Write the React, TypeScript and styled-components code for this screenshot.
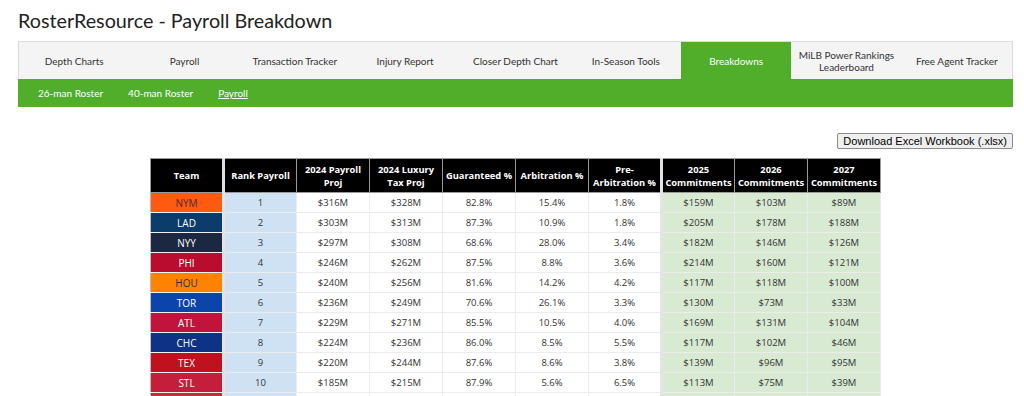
import React from "react";
import styled, { createGlobalStyle } from "styled-components";

const GlobalStyle = createGlobalStyle`
  html, body {
    margin: 0;
    padding: 0;
    background: #ffffff;
    overflow: hidden;
  }
  body {
    font-family: Lato, "Liberation Sans", sans-serif;
  }
`;

const Page = styled.div`
  width: 995px;
  padding: 8px 0 0 18px;
`;

const Title = styled.h1`
  margin: 0 0 7px;
  font-size: 19.75px;
  font-weight: 400;
  line-height: 26px;
  color: #222;
`;

const NavBar = styled.nav`
  display: grid;
  grid-template-columns: repeat(9, 1fr);
  height: 37px;
  background: #f4f4f4;
  border: 1px solid #dcdcdc;
  border-bottom: none;
`;

const NavItem = styled.div<{ $active?: boolean }>`
  display: flex;
  align-items: center;
  justify-content: center;
  text-align: center;
  font-size: 10px;
  line-height: 12px;
  padding: 0 4px;
  color: ${p => (p.$active ? "#ffffff" : "#333333")};
  background: ${p => (p.$active ? "#50ae2b" : "transparent")};
`;

const SubNav = styled.div`
  display: flex;
  align-items: center;
  gap: 25px;
  height: 28px;
  padding-left: 20px;
  background: #50ae2b;
`;

const SubLink = styled.span<{ $current?: boolean }>`
  font-size: 10px;
  color: #ffffff;
  text-decoration: ${p => (p.$current ? "underline" : "none")};
`;

const Toolbar = styled.div`
  display: flex;
  justify-content: flex-end;
  margin-top: 26px;
`;

const DownloadButton = styled.button`
  height: 16px;
  padding: 0 5px;
  font-family: "Liberation Sans", Arial, sans-serif;
  font-size: 11px;
  line-height: 14px;
  color: #000;
  background: #efefef;
  border: 1px solid #8a8a8a;
  border-radius: 2px;
`;

const TableWrap = styled.div`
  display: flex;
  justify-content: center;
  margin-top: 9px;
`;

const Table = styled.table`
  border-collapse: collapse;
  table-layout: fixed;
  font-family: "Open Sans", "Noto Sans", sans-serif;
  font-size: 9.5px;
`;

const Col = styled.col`
  width: 73px;
`;

const Th = styled.th<{ $split?: boolean }>`
  height: 33px;
  padding: 0 1px;
  background: #000;
  color: #fff;
  font-size: 9.3px;
  font-weight: 700;
  line-height: 13px;
  text-align: center;
  border: 1px solid #9a9a9a;
  border-left: ${p => (p.$split ? "3px solid #e2e2e2" : "1px solid #9a9a9a")};
`;

type Tone = "plain" | "rank" | "future";

const tones: Record<Tone, string> = {
  plain: "#ffffff",
  rank: "#cfe2f3",
  future: "#d9ead3"
};

const Td = styled.td<{ $tone?: Tone; $split?: boolean }>`
  height: 19px;
  padding: 0;
  text-align: center;
  color: #333;
  background: ${p => tones[p.$tone || "plain"]};
  border: 1px solid #ececec;
  border-left: ${p => (p.$split ? "3px solid #e4e4e4" : "1px solid #ececec")};
`;

const TeamCell = styled.td<{ $bg: string; $fg: string }>`
  height: 19px;
  padding: 0;
  text-align: center;
  font-size: 10px;
  background: ${p => p.$bg};
  color: ${p => p.$fg};
  border: 1px solid #f2f2f2;
  border-left: 1px solid #bdbdbd;
`;

type Row = {
  team: string;
  bg: string;
  fg: string;
  payroll: string;
  tax: string;
  guaranteed: string;
  arb: string;
  preArb: string;
  c25: string;
  c26: string;
  c27: string;
};

const rows: Row[] = [
  { team: "NYM", bg: "#ff5a12", fg: "#4a2a30", payroll: "$316M", tax: "$328M", guaranteed: "82.8%", arb: "15.4%", preArb: "1.8%", c25: "$159M", c26: "$103M", c27: "$89M" },
  { team: "LAD", bg: "#0c3c6c", fg: "#ffffff", payroll: "$303M", tax: "$313M", guaranteed: "87.3%", arb: "10.9%", preArb: "1.8%", c25: "$205M", c26: "$178M", c27: "$188M" },
  { team: "NYY", bg: "#1c2841", fg: "#ffffff", payroll: "$297M", tax: "$308M", guaranteed: "68.6%", arb: "28.0%", preArb: "3.4%", c25: "$182M", c26: "$146M", c27: "$126M" },
  { team: "PHI", bg: "#ba0c2f", fg: "#ffffff", payroll: "$246M", tax: "$262M", guaranteed: "87.5%", arb: "8.8%", preArb: "3.6%", c25: "$214M", c26: "$160M", c27: "$121M" },
  { team: "HOU", bg: "#ff8200", fg: "#3a2a3a", payroll: "$240M", tax: "$256M", guaranteed: "81.6%", arb: "14.2%", preArb: "4.2%", c25: "$117M", c26: "$118M", c27: "$100M" },
  { team: "TOR", bg: "#0b45ac", fg: "#ffffff", payroll: "$236M", tax: "$249M", guaranteed: "70.6%", arb: "26.1%", preArb: "3.3%", c25: "$130M", c26: "$73M", c27: "$33M" },
  { team: "ATL", bg: "#c0143c", fg: "#ffffff", payroll: "$229M", tax: "$271M", guaranteed: "85.5%", arb: "10.5%", preArb: "4.0%", c25: "$169M", c26: "$131M", c27: "$104M" },
  { team: "CHC", bg: "#0e3386", fg: "#ffffff", payroll: "$224M", tax: "$236M", guaranteed: "86.0%", arb: "8.5%", preArb: "5.5%", c25: "$117M", c26: "$102M", c27: "$46M" },
  { team: "TEX", bg: "#c0111f", fg: "#ffffff", payroll: "$220M", tax: "$244M", guaranteed: "87.6%", arb: "8.6%", preArb: "3.8%", c25: "$139M", c26: "$96M", c27: "$95M" },
  { team: "STL", bg: "#c41e3a", fg: "#ffffff", payroll: "$185M", tax: "$215M", guaranteed: "87.9%", arb: "5.6%", preArb: "6.5%", c25: "$113M", c26: "$75M", c27: "$39M" },
  { team: "BOS", bg: "#bd3039", fg: "#ffffff", payroll: "$181M", tax: "$201M", guaranteed: "80.1%", arb: "15.0%", preArb: "4.9%", c25: "$126M", c26: "$112M", c27: "$92M" }
];

const navItems = [
  "Depth Charts",
  "Payroll",
  "Transaction Tracker",
  "Injury Report",
  "Closer Depth Chart",
  "In-Season Tools",
  "Breakdowns",
  "MiLB Power Rankings Leaderboard",
  "Free Agent Tracker"
];

const App = () => (
  <>
    <GlobalStyle />
    <Page>
      <Title>RosterResource - Payroll Breakdown</Title>
      <NavBar>
        {navItems.map(item => (
          <NavItem key={item} $active={item === "Breakdowns"}>
            {item === "MiLB Power Rankings Leaderboard" ? (
              <span>
                MiLB Power Rankings
                <br />
                Leaderboard
              </span>
            ) : (
              item
            )}
          </NavItem>
        ))}
      </NavBar>
      <SubNav>
        <SubLink>26-man Roster</SubLink>
        <SubLink>40-man Roster</SubLink>
        <SubLink $current>Payroll</SubLink>
      </SubNav>
      <Toolbar>
        <DownloadButton>Download Excel Workbook (.xlsx)</DownloadButton>
      </Toolbar>
      <TableWrap>
        <Table>
          <colgroup>
            {Array.from({ length: 10 }).map((_, i) => (
              <Col key={i} />
            ))}
          </colgroup>
          <thead>
            <tr>
              <Th>Team</Th>
              <Th $split>Rank Payroll</Th>
              <Th>2024 Payroll Proj</Th>
              <Th>2024 Luxury Tax Proj</Th>
              <Th>Guaranteed %</Th>
              <Th>Arbitration %</Th>
              <Th>Pre- Arbitration %</Th>
              <Th $split>2025 Commitments</Th>
              <Th>2026 Commitments</Th>
              <Th>2027 Commitments</Th>
            </tr>
          </thead>
          <tbody>
            {rows.map((r, i) => (
              <tr key={r.team}>
                <TeamCell $bg={r.bg} $fg={r.fg}>
                  {r.team}
                </TeamCell>
                <Td $tone="rank" $split>
                  {i + 1}
                </Td>
                <Td>{r.payroll}</Td>
                <Td>{r.tax}</Td>
                <Td>{r.guaranteed}</Td>
                <Td>{r.arb}</Td>
                <Td>{r.preArb}</Td>
                <Td $tone="future" $split>
                  {r.c25}
                </Td>
                <Td $tone="future">{r.c26}</Td>
                <Td $tone="future">{r.c27}</Td>
              </tr>
            ))}
          </tbody>
        </Table>
      </TableWrap>
    </Page>
  </>
);

export default App;
